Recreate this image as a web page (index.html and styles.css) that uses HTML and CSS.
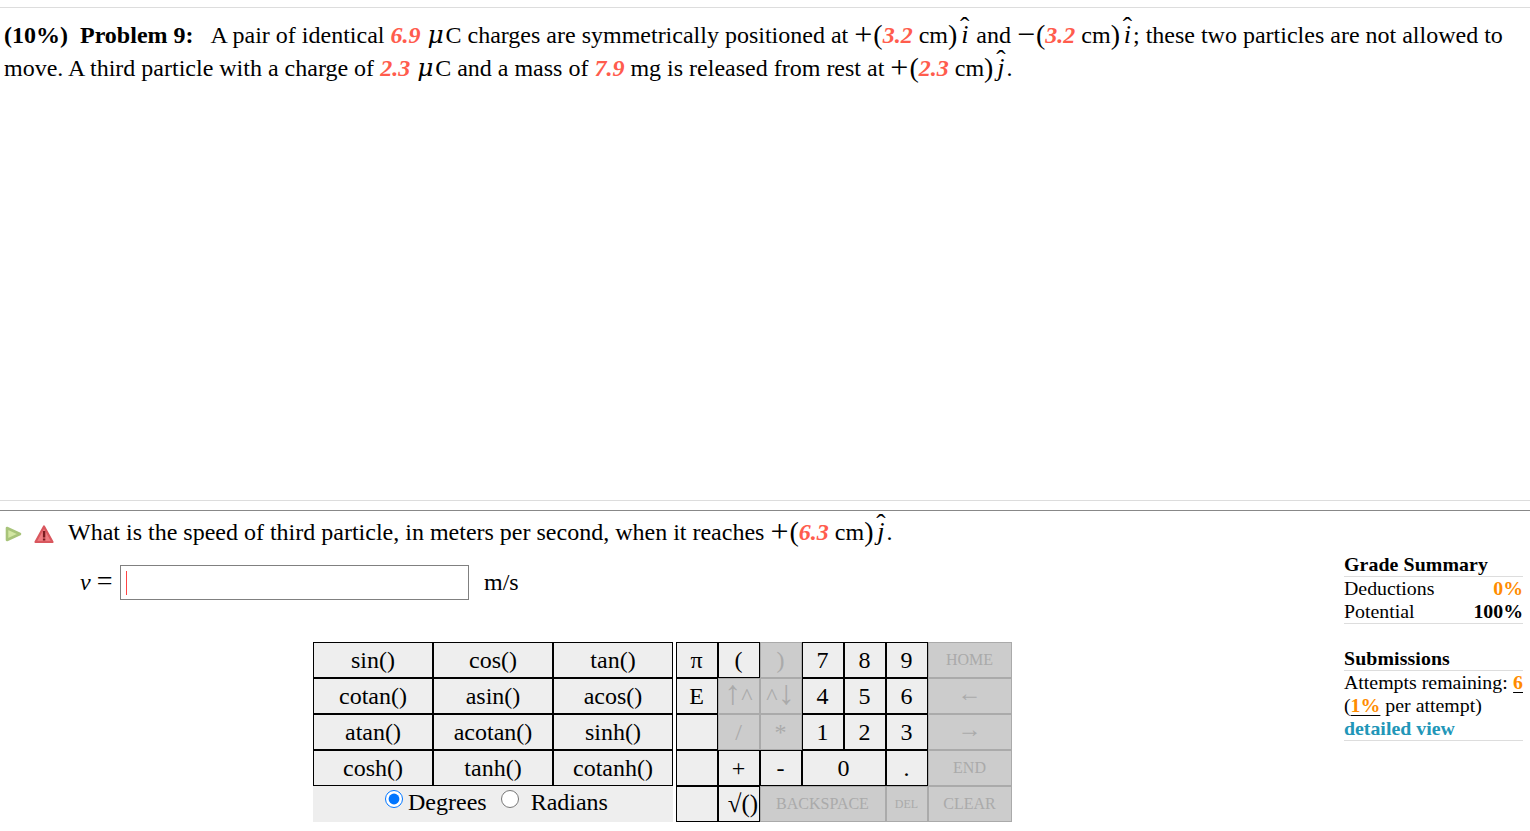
FILE: index.html
```html
<!DOCTYPE html>
<html lang="en">
<head>
  <meta charset="UTF-8" />
  <title>Problem 9</title>
  <link rel="stylesheet" href="styles.css">
</head>
<body>
  <hr class="rule rule-top">

  <section class="problem">
    <p>
      <b class="lead">(10%)&nbsp; Problem 9:</b>
      <span class="lead-gap"></span>A pair of identical <em class="val">6.9</em> <i class="mu">μ</i>C charges are symmetrically positioned at <span class="op">+</span><span class="paren">(</span><em class="val">3.2</em> cm<span class="paren">)</span><span class="hat"><i>i</i></span> and <span class="op">−</span><span class="paren">(</span><em class="val">3.2</em> cm<span class="paren">)</span><span class="hat"><i>i</i></span>; these two particles are not allowed to move. A third particle with a charge of <em class="val">2.3</em> <i class="mu">μ</i>C and a mass of <em class="val">7.9</em> mg is released from rest at <span class="op">+</span><span class="paren">(</span><em class="val">2.3</em> cm<span class="paren">)</span><span class="hat"><i>j</i></span>.
    </p>
  </section>

  <hr class="rule rule-light">
  <hr class="rule rule-dark">

  <section class="question">
    <svg class="icon-play" width="17" height="16" viewBox="0 0 17 16">
      <path d="M2 2 L15 8 L2 14 Z" fill="#d3e7a2" stroke="#a8c47a" stroke-width="2.6" stroke-linejoin="round"/>
    </svg>
    <svg class="icon-warn" width="20" height="19" viewBox="0 0 20 19">
      <path d="M10 1.5 L18.5 17 L1.5 17 Z" fill="#ee7a80" stroke="#d9575e" stroke-width="2.2" stroke-linejoin="round"/>
      <rect x="8.9" y="6" width="2.4" height="6.5" fill="#7a1a1f"/>
      <rect x="8.9" y="13.5" width="2.4" height="2" fill="#7a1a1f"/>
    </svg>
    <p class="question-text">What is the speed of third particle, in meters per second, when it reaches <span class="op">+</span><span class="paren">(</span><em class="val">6.3</em> cm<span class="paren">)</span><span class="hat"><i>j</i></span>.</p>
  </section>

  <div class="work">
    <div class="work-main">
      <div class="answer">
        <label class="answer-label" for="answer"><i>v</i> <span class="equals">=</span></label>
        <div class="answer-box" id="answer"><span class="caret"></span></div>
        <span class="answer-unit">m/s</span>
      </div>

      <div class="keypad">
        <div class="funcs">
          <table class="keys keys-func">
            <tr><td>sin()</td><td>cos()</td><td>tan()</td></tr>
            <tr><td>cotan()</td><td>asin()</td><td>acos()</td></tr>
            <tr><td>atan()</td><td>acotan()</td><td>sinh()</td></tr>
            <tr><td>cosh()</td><td>tanh()</td><td>cotanh()</td></tr>
          </table>
          <div class="angle">
            <input type="radio" name="angle" id="deg" checked><label for="deg">Degrees</label>
            <input type="radio" name="angle" id="rad"><label class="rad-label" for="rad">Radians</label>
          </div>
        </div>

        <table class="keys keys-num">
          <tr>
            <td>π</td><td>(</td><td class="off">)</td><td>7</td><td>8</td><td>9</td>
            <td class="off small wide">HOME</td>
          </tr>
          <tr>
            <td>E</td><td class="off"><span class="arrow">↑</span>^</td><td class="off">^<span class="arrow">↓</span></td><td>4</td><td>5</td><td>6</td>
            <td class="off small wide"><span class="side-arrow">←</span></td>
          </tr>
          <tr>
            <td></td><td class="off">/</td><td class="off">*</td><td>1</td><td>2</td><td>3</td>
            <td class="off small wide"><span class="side-arrow">→</span></td>
          </tr>
          <tr>
            <td></td><td>+</td><td>-</td><td colspan="2">0</td><td>.</td>
            <td class="off small wide">END</td>
          </tr>
          <tr>
            <td></td><td class="sqrt">√()</td><td class="off small" colspan="3">BACKSPACE</td><td class="off tiny">DEL</td>
            <td class="off small wide">CLEAR</td>
          </tr>
        </table>
      </div>
    </div>

    <aside class="side">
      <h4>Grade Summary</h4>
      <div class="side-row"><span>Deductions</span><b class="orange">0%</b></div>
      <div class="side-row side-end"><span>Potential</span><b>100%</b></div>

      <h4 class="side-sub">Submissions</h4>
      <div class="side-row"><span>Attempts remaining:</span><b class="orange under">6</b></div>
      <div>(<b class="orange under">1%</b> per attempt)</div>
      <div class="side-end"><b class="link">detailed view</b></div>
    </aside>
  </div>
</body>
</html>
```

FILE: styles.css
```css
* {
  box-sizing: border-box;
}

body {
  margin: 0;
  font-family: "Liberation Serif", "Times New Roman", serif;
  font-size: 24px;
  color: #000;
  background: #fff;
}

.rule {
  display: block;
  margin: 0;
  border: 0;
  height: 1px;
}

.rule-top {
  margin-top: 7px;
  background: #ddd;
}

.rule-light {
  background: #ddd;
}

.rule-dark {
  margin-top: 9px;
  background: #888;
}

.problem {
  height: 492px;
  padding: 11px 4px 0;
}

.problem p {
  margin: 0;
  line-height: 33px;
}

.lead-gap {
  display: inline-block;
  width: 11px;
}

.val {
  color: #ff5c4d;
  font-weight: bold;
  font-style: italic;
}

.mu {
  display: inline-block;
  width: 19px;
  padding-left: 1px;
  font-family: "DejaVu Serif", serif;
  font-size: 25px;
  line-height: 0;
}

.op {
  margin-right: 1px;
  font-size: 32px;
  line-height: 0;
  vertical-align: -2px;
}

.paren {
  font-size: 28px;
  line-height: 0;
  vertical-align: -1px;
}

.hat {
  position: relative;
  display: inline-block;
  width: 11px;
  margin-left: 2px;
  font-size: 26px;
  line-height: 20px;
  text-align: center;
}

.hat::before {
  content: "ˆ";
  position: absolute;
  left: 0;
  right: 0;
  top: -8px;
  font-size: 28px;
  line-height: 20px;
  text-align: center;
}

.question {
  display: flex;
  align-items: center;
  height: 44px;
  padding: 0 0 2px 5px;
}

.icon-play {
  margin: 4px 12px 0 0;
}

.icon-warn {
  margin: 4px 14px 0 0;
}

.question-text {
  margin: 0;
  line-height: 33px;
}

.work {
  display: flex;
  justify-content: space-between;
  padding-right: 7px;
}

.answer {
  display: flex;
  align-items: center;
  height: 35px;
  margin-top: 10px;
  padding-left: 80px;
}

.answer-label {
  width: 40px;
}

.equals {
  font-size: 28px;
  line-height: 0;
}

.answer-box {
  display: flex;
  align-items: center;
  width: 349px;
  height: 35px;
  padding-left: 5px;
  border: 1px solid #808080;
}

.caret {
  width: 1px;
  height: 24px;
  background: #f44;
}

.answer-unit {
  margin-left: 15px;
}

.keypad {
  display: flex;
  gap: 3px;
  margin-top: 42px;
  margin-left: 313px;
}

.keys {
  border-collapse: separate;
  border-spacing: 0;
  table-layout: fixed;
}

.keys td {
  height: 36px;
  padding: 0;
  border: 1px solid #000;
  background: #eee;
  text-align: center;
}

.keys-func {
  width: 360px;
}

.keys-num {
  width: 336px;
}

.keys-num td {
  width: 42px;
  padding-right: 1px;
}

.keys-num td.wide {
  width: 84px;
}

.keys td.off {
  border-color: #aaa;
  background: #ccc;
  color: #aaa;
}

.keys td.small {
  font-size: 16px;
}

.keys td.tiny {
  font-size: 12px;
}

.keys td.sqrt {
  padding: 0 0 0 8px;
  font-size: 25px;
  white-space: nowrap;
}

.arrow {
  font-size: 34px;
  line-height: 0;
}

.side-arrow {
  font-size: 24px;
  line-height: 0;
}

.angle {
  display: flex;
  align-items: center;
  height: 36px;
  padding: 0 0 4px 72px;
  background: #eee;
}

.angle input {
  width: 18px;
  height: 18px;
  margin: 0 5px 6px 0;
}

.angle label {
  margin-right: 14px;
}

.angle .rad-label {
  margin-left: 7px;
}

.side {
  width: 179px;
  margin-top: -2px;
  font-size: 19.85px;
  line-height: 23px;
}

.side h4 {
  margin: 0;
  font-size: 19.85px;
  letter-spacing: 0.1px;
  border-bottom: 1px solid #ddd;
}

.side .side-sub {
  margin-top: 23px;
}

.side-row {
  display: flex;
  justify-content: space-between;
}

.side-end {
  border-bottom: 1px solid #ddd;
}

.orange {
  color: #ff8c00;
}

.under {
  text-decoration: underline #000;
  text-underline-offset: 3px;
}

.link {
  color: #2196b8;
}
```
